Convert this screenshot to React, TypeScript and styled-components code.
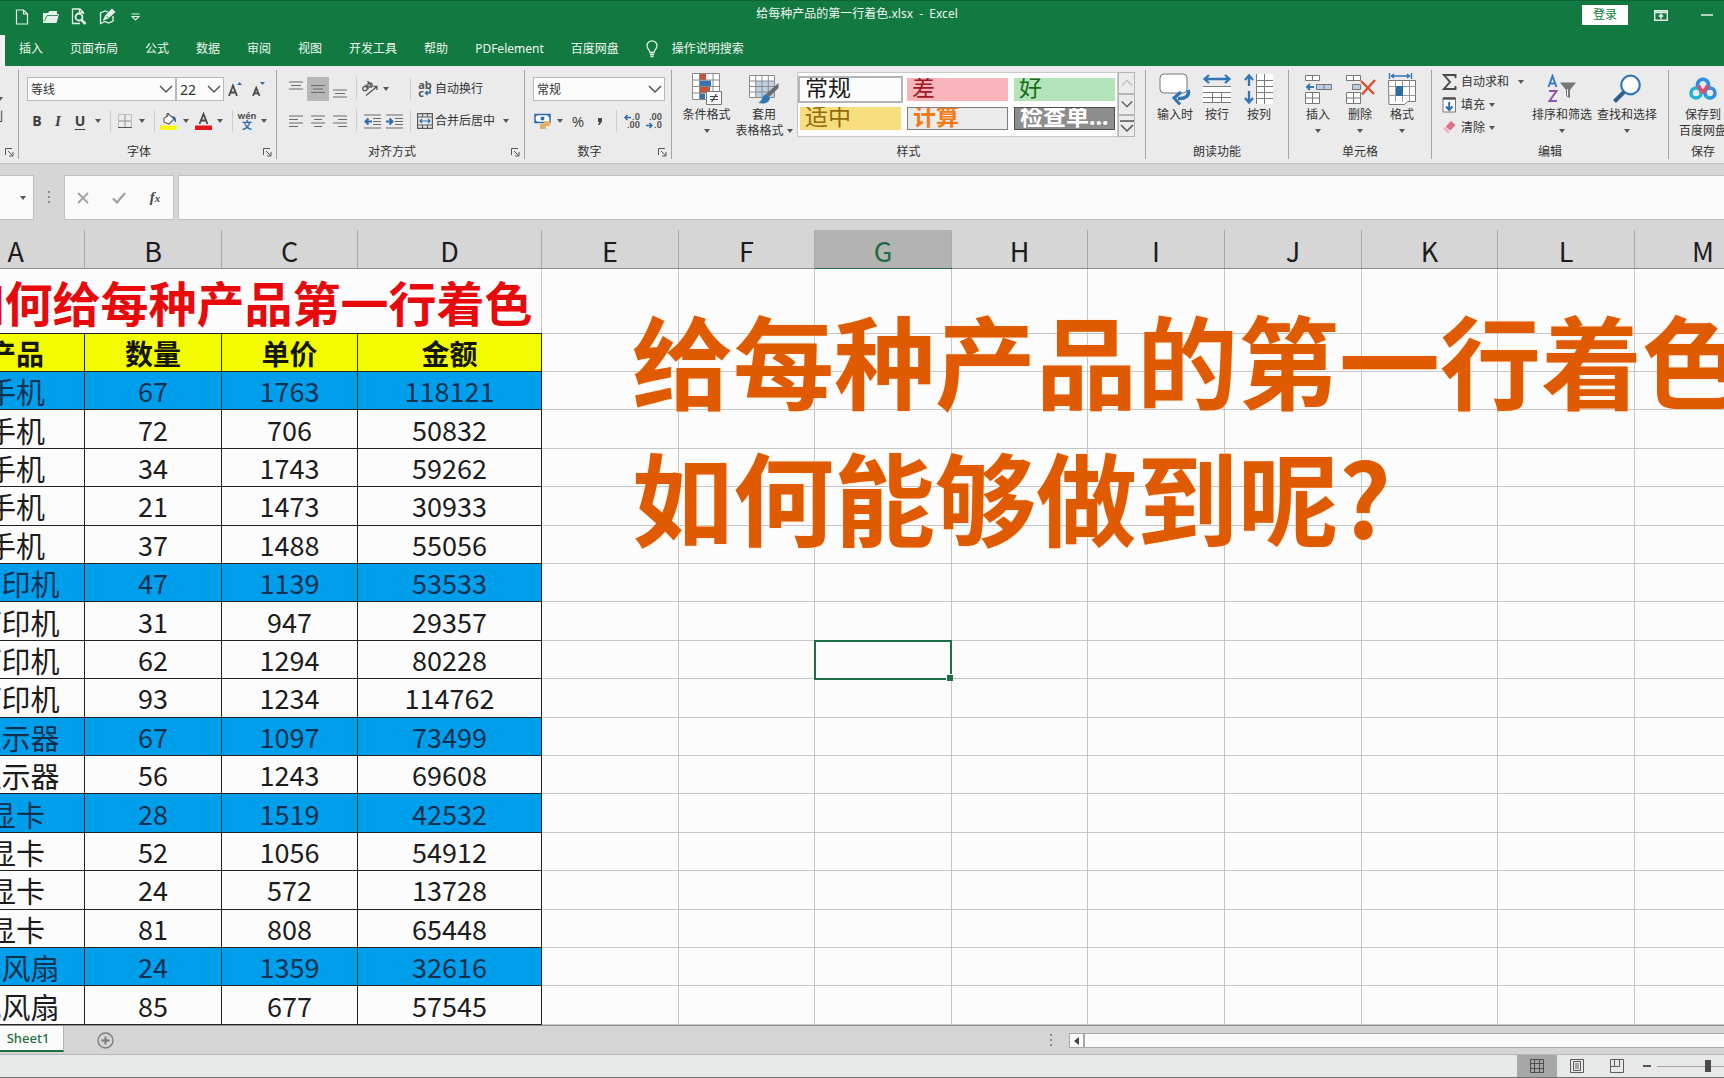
import React from "react";
import styled, { createGlobalStyle, css } from "styled-components";

const GlobalStyle = createGlobalStyle`
  * { box-sizing: border-box; }
  html, body { margin: 0; height: 100%; overflow: hidden; }
  body, button, input, select { font-family: "Noto Sans", "Noto Sans CJK SC", sans-serif; font-size: 12px; color: #333; }
  button { background: none; border: 0; padding: 0; margin: 0; line-height: 16px; white-space: nowrap; }
  svg { display: block; flex: none; }
`;

const Window = styled.div`
  height: 100vh;
  display: flex;
  flex-direction: column;
  overflow: hidden;
  background: #fcfcfc;
`;

/* ---------- title bar and tabs ---------- */

const Head = styled.header`
  flex: none;
  background: #127a40;
  border-top: 1px solid #0b6534;
  color: #eef7f1;
`;
const TitleBar = styled.div`
  display: flex;
  height: 31px;
`;
const QuickBar = styled.div`
  display: flex;
  align-items: center;
  width: 150px;
  padding-left: 8px;
`;
const QuickBtn = styled.button`
  width: 29px;
  height: 24px;
  display: grid;
  place-items: center;
`;
const DocTitle = styled.div`
  flex: 1;
  text-align: center;
  line-height: 16px;
  padding-top: 5px;
  white-space: pre;
`;
const WindowBar = styled.div`
  display: flex;
  align-items: flex-start;
  width: 160px;
  padding: 4px 0 0 18px;
`;
const SignIn = styled.button`
  flex: none;
  width: 46px;
  height: 20px;
  margin-right: 10px;
  background: #fff;
  color: #127a40;
`;
const WinBtn = styled.button`
  flex: none;
  width: 46px;
  height: 20px;
  display: grid;
  place-items: center;
`;
const Tabs = styled.nav`
  display: flex;
  align-items: center;
  height: 34px;
  gap: 27px;
`;
const ActiveTab = styled.button`
  align-self: flex-end;
  width: 5px;
  height: 31px;
  background: #f2f2f2;
  margin-right: -13px;
`;
const Tab = styled.button`
  display: flex;
  align-items: center;
  gap: 14px;
  color: #eef7f1;
`;

/* ---------- ribbon ---------- */

const Ribbon = styled.section`
  flex: none;
  display: flex;
  height: 98px;
  padding: 4px 0;
  background: #ebebeb;
  border-bottom: 1px solid #c2c2c2;
  overflow: hidden;
`;
const GroupBox = styled.div<{ $w: number }>`
  flex: none;
  width: ${(p) => p.$w}px;
  display: flex;
  flex-direction: column;
  border-right: 1px solid #a3a3a3;
`;
const GroupBody = styled.div<{ $pad?: number; $dir?: string; $top?: number }>`
  flex: 1;
  min-height: 0;
  display: flex;
  flex-direction: ${(p) => p.$dir || "column"};
  gap: ${(p) => (p.$dir ? 0 : 8)}px;
  padding: ${(p) => p.$top ?? 7}px 0 0 ${(p) => p.$pad ?? 8}px;
`;
const GroupFoot = styled.div`
  display: flex;
  align-items: center;
  height: 14px;
  line-height: 14px;
`;
const FootText = styled.span`
  flex: 1;
  text-align: center;
`;
const Launcher = styled.button`
  width: 17px;
  height: 14px;
  display: grid;
  place-items: center;
`;
const Row = styled.div`
  display: flex;
  align-items: center;
  height: 24px;
`;
const Cluster = styled.div<{ $w: number }>`
  display: flex;
  width: ${(p) => p.$w}px;
`;
const Slot = styled.button<{ $w?: number; $on?: boolean }>`
  width: ${(p) => p.$w || 22}px;
  height: 24px;
  display: flex;
  align-items: center;
  justify-content: center;
  background: ${(p) => (p.$on ? "#b7b7b7" : "none")};
`;
const Glyph = styled.span<{ $k: string }>`
  font: 700 14px/18px "Open Sans", sans-serif;
  color: #3d3d3d;
  ${(p) => p.$k === "I" && css`font: italic 700 15px/18px "Liberation Serif", serif;`}
  ${(p) => p.$k === "U" && css`text-decoration: underline; text-underline-offset: 3px;`}
  ${(p) => p.$k === "%" && css`font-weight: 400; font-size: 15px;`}
`;
const Sep = styled.span<{ $w?: number }>`
  width: ${(p) => p.$w || 10}px;
  height: 22px;
  display: grid;
  place-items: center;
  &::before { content: ""; width: 1px; height: 22px; background: #cbcbcb; }
`;
const TextBtn = styled.button`
  display: flex;
  align-items: center;
  height: 24px;
`;
const IconCell = styled.span<{ $w?: number }>`
  width: ${(p) => p.$w || 23}px;
  display: grid;
  place-items: center;
`;
const Field = styled.label<{ $w: number; $size?: number }>`
  position: relative;
  width: ${(p) => p.$w}px;
  height: 24px;
  select {
    appearance: none;
    width: 100%;
    height: 24px;
    padding: 0 0 0 3px;
    border: 1px solid #b9b9b9;
    border-radius: 0;
    background: #fcfcfc;
    outline: 0;
    font-size: ${(p) => p.$size || 12}px;
  }
  svg { position: absolute; right: 3px; top: 8px; pointer-events: none; }
`;
const BigBtn = styled.button<{ $w: number }>`
  flex: none;
  width: ${(p) => p.$w}px;
  display: flex;
  flex-direction: column;
  align-items: center;
`;
const BigIcon = styled.span`
  height: 37px;
  padding-top: 1px;
  display: grid;
  place-items: center;
`;
const BigLine = styled.span`
  display: flex;
  align-items: center;
  justify-content: center;
  gap: 3px;
  height: 16px;
  line-height: 16px;
`;
const Gallery = styled.div`
  display: grid;
  grid-template-columns: repeat(3, 101px);
  grid-template-rows: 23px 23px;
  gap: 6px;
  width: 321px;
  height: 65px;
  margin: 2px 0 0 4px;
  padding: 5px 2px;
  background: #fcfcfc;
  border: 1px solid #c8c8c8;
`;
const StyleCell = styled.button<{ $bg: string; $fg: string; $line?: string; $bold?: boolean; $sel?: boolean }>`
  height: 23px;
  overflow: hidden;
  background: ${(p) => p.$bg};
  color: ${(p) => p.$fg};
  font-size: 23px;
  line-height: 16px;
  font-weight: ${(p) => (p.$bold ? 700 : 400)};
  text-align: left;
  padding: 0 0 6px 5px;
  border: ${(p) => (p.$line ? `1px solid ${p.$line}` : "0")};
  box-shadow: ${(p) => (p.$sel ? "0 0 0 2px #b2b4b5" : "none")};
`;
const GalleryNav = styled.div`
  display: grid;
  grid-template-rows: repeat(3, 1fr);
  width: 17px;
  height: 65px;
  margin-top: 2px;
`;
const NavBtn = styled.button`
  display: grid;
  place-items: center;
  border: 1px solid #b5b5b5;
`;
const SmallList = styled.div`
  display: flex;
  flex-direction: column;
  width: 87px;
`;
const SmallBtn = styled.button`
  display: flex;
  align-items: center;
  height: 23px;
  gap: 4px;
`;
const ClipTail = styled.div`
  flex: 1;
  display: flex;
  flex-direction: column;
  gap: 8px;
  width: 6px;
  align-items: flex-end;
  padding-top: 27px;
`;
const ClipText = styled.span`
  line-height: 16px;
  padding-right: 3px;
`;

/* ---------- formula bar ---------- */

const FormulaRow = styled.section`
  flex: none;
  display: flex;
  height: 66px;
  padding: 11px 0 10px;
  background: #d6d6d6;
`;
const NameBox = styled.button`
  width: 34px;
  background: #fafafa;
  border: 1px solid #c0c0c0;
  border-left: 0;
  padding-right: 7px;
  display: flex;
  align-items: center;
  justify-content: flex-end;
`;
const Grip = styled.span<{ $w: number }>`
  width: ${(p) => p.$w}px;
  display: grid;
  place-items: center;
`;
const FxBox = styled.div`
  width: 110px;
  display: grid;
  grid-template-columns: repeat(3, 36px);
  background: #fafafa;
  border: 1px solid #c0c0c0;
  margin-right: 4px;
  button { display: grid; place-items: center; }
`;
const FxMark = styled.span`
  font: italic 700 15px/20px "Liberation Serif", serif;
  color: #4a4a4a;
  small { font-size: 11px; }
`;
const FormulaInput = styled.input`
  flex: 1;
  min-width: 0;
  border: 1px solid #c0c0c0;
  border-right: 0;
  background: #fafafa;
  padding: 0 8px;
  outline: 0;
`;

/* ---------- sheet ---------- */

const SheetArea = styled.main`
  position: relative;
  flex: 1;
  min-height: 0;
  overflow: hidden;
`;
const Grid = styled.table`
  table-layout: fixed;
  border-collapse: collapse;
  width: 1824px;
  height: 100%;
  margin-left: -53px;
  font-family: "Noto Sans CJK SC", sans-serif;
  font-size: 27px;
  line-height: 32px;
  color: #1c1c1c;
`;
const ColHead = styled.th<{ $on?: boolean }>`
  height: 38px;
  padding: 4px 0 0;
  font-weight: 400;
  background: ${(p) => (p.$on ? "#b3b3b3" : "#d6d6d6")};
  color: ${(p) => (p.$on ? "#1c6b43" : "#1c1c1c")};
  border-right: 1px solid #a9a9a9;
  border-bottom: 1px solid ${(p) => (p.$on ? "#1c6b43" : "#8c8c8c")};
`;
const Cell = styled.td`
  position: relative;
  padding: 1px 0 0;
  border: 1px solid #c4c6c8;
`;
const TitleCell = styled(Cell)`
  height: 65px;
  color: #e8090d;
  font-size: 48px;
  line-height: 60px;
  font-weight: 700;
  text-align: center;
  white-space: nowrap;
  border-bottom-color: #222;
`;
const DataCell = styled(Cell)<{ $tone?: "head" | "mark"; $name?: boolean }>`
  text-align: center;
  white-space: nowrap;
  border-color: #222;
  font-size: ${(p) => (p.$name ? 29 : 27)}px;
  ${(p) => p.$tone === "head" && css`background: #f3fb00; font-weight: 700; font-size: 28px; color: #14160a;`}
  ${(p) => p.$tone === "mark" && css`background: #009feb; color: #10304f;`}
`;
const Selection = styled.span`
  position: absolute;
  inset: -1px -1px -2px;
  border: 2px solid #1f6f45;
  &::after {
    content: "";
    position: absolute;
    right: -3px;
    bottom: -3px;
    width: 6px;
    height: 6px;
    background: #1f6f45;
    box-shadow: -1px -1px 0 #fcfcfc;
  }
`;
const Caption = styled.div`
  position: absolute;
  left: 632px;
  top: 60px;
  color: #df5a00;
  font-family: "Noto Sans CJK SC", sans-serif;
  font-size: 101px;
  line-height: 137px;
  font-weight: 700;
  white-space: nowrap;
  text-shadow: 0 0 2px #ffdfc0;
`;

/* ---------- sheet tabs and status ---------- */

const SheetBar = styled.section`
  flex: none;
  display: flex;
  height: 30px;
  background: #d5d5d5;
  border-top: 1px solid #8e8e8e;
  border-bottom: 1px solid #b8b8b8;
`;
const SheetTab = styled.button`
  width: 64px;
  height: 26px;
  background: #fafafa;
  border-bottom: 2px solid #1f6f45;
  border-right: 1px solid #b5b5b5;
  color: #1f6f45;
  font-size: 13px;
  font-weight: 500;
  padding-right: 7px;
`;
const AddSheet = styled.button`
  margin-left: 31px;
  width: 20px;
  display: grid;
  place-items: center;
`;
const Scroller = styled.div`
  width: 40%;
  margin-left: auto;
  display: flex;
  padding: 7px 0 6px;
`;
const ScrollArrow = styled.button`
  width: 15px;
  background: #fafafa;
  border: 1px solid #a8a8a8;
  display: grid;
  place-items: center;
`;
const ScrollTrack = styled.div`
  flex: 1;
  background: #fafafa;
  border: 1px solid #a8a8a8;
  border-width: 1px 0 1px 1px;
`;
const StatusBar = styled.footer`
  flex: none;
  display: flex;
  justify-content: flex-end;
  height: 23px;
  background: #e7e8e8;
  border-bottom: 1px solid #6c7272;
  overflow: hidden;
`;
const ViewBtn = styled.button<{ $on?: boolean }>`
  width: 40px;
  display: grid;
  place-items: center;
  background: ${(p) => (p.$on ? "#a6a7a7" : "none")};
`;
const ZoomOut = styled.button`
  width: 20px;
  display: grid;
  place-items: center;
`;
const ZoomSlot = styled.label`
  width: 67px;
  display: flex;
  align-items: center;
`;
const ZoomRange = styled.input`
  flex: none;
  appearance: none;
  width: 102px;
  height: 14px;
  margin: 0;
  background: linear-gradient(#a2a2a2, #a2a2a2) center / 100% 1px no-repeat;
  &::-webkit-slider-thumb {
    appearance: none;
    width: 6px;
    height: 12px;
    background: #4c4c4c;
  }
`;

/* ---------- icons ---------- */

const Caret = ({ c = "#555" }: { c?: string }) => (
  <svg width="6" height="4" viewBox="0 0 6 4"><path d="M0 0h6L3 4z" fill={c} /></svg>
);
const Chevron = ({ c = "#555", w = 14, up = false }: { c?: string; w?: number; up?: boolean }) => (
  <svg width={w} height="9" viewBox="0 0 14 9"><path d={up ? "M1 8l6-6 6 6" : "M1 1l6 6 6-6"} fill="none" stroke={c} strokeWidth="1.5" /></svg>
);
const Dots = () => (
  <svg width="3" height="13" viewBox="0 0 3 13" fill="#8a8a8a"><path d="M0 0h2v2H0zM0 5h2v2H0zM0 10h2v2H0z" /></svg>
);
const LaunchIcon = () => (
  <svg width="9" height="9" viewBox="0 0 9 9" fill="none" stroke="#555"><path d="M.5 7V.5H7M3 3l4.500 4.500M8 4v4H4" /></svg>
);
const NewFile = () => (
  <svg width="14" height="16" viewBox="0 0 14 16" fill="none" stroke="#e4f2ea" strokeWidth="1.200"><path d="M1.500 1h7l4 4v10h-11zM8.500 1v4h4" /></svg>
);
const OpenFolder = () => (
  <svg width="18" height="16" viewBox="0 0 18 16"><path d="M1 14V4h5l1.500-2H15v3h2l-2.500 9z" fill="#e4f2ea" /><path d="M2.500 12L5 6.500h11" fill="none" stroke="#127a40" strokeWidth=".8" /></svg>
);
const Preview = () => (
  <svg width="16" height="17" viewBox="0 0 16 17" fill="none" stroke="#e4f2ea" strokeWidth="1.300"><path d="M12.500 6V4.500L9 1H1.500v14.500H9M8.500 1v3.500h4" /><circle cx="8" cy="9" r="3.500" strokeWidth="1.800" /><path d="M10.500 12l4 4" strokeWidth="2.500" /></svg>
);
const Draw = () => (
  <svg width="17" height="17" viewBox="0 0 17 17" fill="none" stroke="#e4f2ea" strokeWidth="1.300"><path d="M9 4L6 3 1.500 5v10.500l4.500-2 3.500 1.500L14 13V8" /><path d="M5 11.500l1.500-3.500L13 1.500l2.500 2.500L9 10z" fill="#e4f2ea" /><path d="M7.500 8l2 2" stroke="#127a40" strokeWidth=".8" /></svg>
);
const QuickMore = () => (
  <svg width="9" height="8" viewBox="0 0 9 8" fill="none" stroke="#e4f2ea" strokeWidth="1.200"><path d="M.5 1h8M1 3.500h7L4.500 7z" /></svg>
);
const Display = () => (
  <svg width="14" height="11" viewBox="0 0 14 11" fill="none" stroke="#e4f2ea" strokeWidth="1.400"><path d="M.7.7h12.600v9.600H.7zM.7 2.500h12.600M7 9V4.500M4.800 6.500L7 4.500l2.200 2" /></svg>
);
const Bulb = () => (
  <svg width="12" height="18" viewBox="0 0 12 18" fill="none" stroke="#e4f2ea" strokeWidth="1.300"><path d="M4 12.500C4 10 1 9 1 5.800a5 5 0 0110 0C11 9 8 10 8 12.500zM4 14.500h4M4.500 16.500h3" /></svg>
);
const FontSize = ({ up }: { up?: boolean }) => (
  <svg width="16" height="18" viewBox="0 0 16 18"><path d={up ? "M1 16L5 5.500 9 16M2.500 12.500h5" : "M2 16l3.200-8L8.500 16M3.200 13.300h4"} fill="none" stroke="#4a4a4a" strokeWidth="1.800" /><path d={up ? "M9 5l2.500-3L14 5z" : "M9 2h5l-2.500 3z"} fill="#2f6da8" /></svg>
);
const Borders = () => (
  <svg width="14" height="14" viewBox="0 0 14 14" fill="none" stroke="#8f8f8f"><path d="M.5.5h13v13H.5z" strokeDasharray="1 1" /><path d="M7 1v12M1 7h12" /><path d="M0 13.500h14" stroke="#555" /></svg>
);
const Fill = () => (
  <svg width="18" height="18" viewBox="0 0 18 18"><path d="M0 13.500h17V18H0z" fill="#f7f714" /><path d="M4 6.500l5-4 5 4.500-5 5-5-2z" fill="#fff" stroke="#666" strokeWidth="1.200" /><path d="M7 5V1.500h2" fill="none" stroke="#555" /><path d="M12 4c3 0 4.500 2 4 6-1.500 0-2-1-2-3z" fill="#2f6da8" /></svg>
);
const FontColor = () => (
  <svg width="17" height="18" viewBox="0 0 17 18"><path d="M0 13.500h17V18H0z" fill="#e3171b" /><path d="M4.500 12L8.500 2l4 10M6 8.500h5" fill="none" stroke="#4a4a4a" strokeWidth="1.800" /></svg>
);
const PhoneticBox = styled.span`
  display: flex;
  flex-direction: column;
  align-items: center;
  font: 700 9px/8px "Noto Sans", sans-serif;
  color: #555;
  b { font: 700 10px/10px "Noto Sans CJK SC", sans-serif; color: #2f6da8; }
`;
const Lines = ({ d }: { d: string }) => (
  <svg width="16" height="18" viewBox="0 0 16 18" fill="none" stroke="#6a6a6a" strokeWidth="1.200"><path d={d} /></svg>
);
const Orient = () => (
  <svg width="18" height="16" viewBox="0 0 18 16" fill="none" stroke="#555" strokeWidth="1.300"><circle cx="4" cy="7.500" r="2.200" /><path d="M4.500 3.500l3 4.500" /><circle cx="9" cy="4" r="2.200" /><path d="M6.500 0l4.500 6M5 14.500L15.500 6M12.500 5.500h3.500V9" /></svg>
);
const Indent = ({ out }: { out?: boolean }) => (
  <svg width="17" height="15" viewBox="0 0 17 15" fill="none" stroke="#6a6a6a" strokeWidth="1.200"><path d="M0 1h17M9 4.500h8M9 7.500h8M9 10.500h8M0 14h17" /><path d={out ? "M8 7.500H1.500M4.500 4.500l-3 3 3 3" : "M0 7.500h6.500M3.500 4.500l3 3-3 3"} stroke="#2f6da8" strokeWidth="2" /></svg>
);
const WrapBox = styled.span`
  display: flex;
  align-items: flex-start;
  flex-direction: column;
  font: 700 11px/8px "Noto Sans", sans-serif;
  color: #555;
  i { font-style: normal; display: flex; }
`;
const Merge = () => (
  <svg width="16" height="16" viewBox="0 0 16 16" fill="none" stroke="#5a5a5a" strokeWidth="1.200"><path d="M.6.6h14.800v14.800H.6zM.6 4h14.800M.6 12h14.800M5.500.6V4M10.500.6V4M5.500 12v3.400M10.500 12v3.400" /><path d="M3 8h10M5 6L3 8l2 2M11 6l2 2-2 2" stroke="#2f6da8" /></svg>
);
const Currency = () => (
  <svg width="18" height="17" viewBox="0 0 18 17"><path d="M1 1.500h15v8H1z" fill="#fff" stroke="#2f6da8" strokeWidth="1.500" /><path d="M1 1h4L1 4zM16 1v4l-4-4zM1 10V7l4 3z" fill="#2f6da8" /><circle cx="8.500" cy="5.500" r="2" fill="#2f6da8" /><path d="M10 8h6v5h-6zM6 11h6v5H6z" fill="#e6b06a" /></svg>
);
const DecimalBox = styled.span`
  display: flex;
  flex-direction: column;
  align-items: flex-end;
  font: 700 9px/8px "Roboto", sans-serif;
  color: #555;
  i { font-style: normal; display: flex; align-items: center; gap: 1px; }
`;
const MiniArrow = ({ r }: { r?: boolean }) => (
  <svg width="7" height="7" viewBox="0 0 7 7" fill="none" stroke="#2f6da8" strokeWidth="1.500"><path d={r ? "M0 3.500h6M3.500 1L6 3.500 3.500 6" : "M7 3.500H1M3.500 1L1 3.500 3.500 6"} /></svg>
);
const WrapArrow = () => (
  <svg width="7" height="7" viewBox="0 0 7 7" fill="none" stroke="#2f6da8" strokeWidth="1.500"><path d="M6 0v4H1.500M3.500 2l-2 2 2 2" /></svg>
);
const CondFormat = () => (
  <svg width="32" height="32" viewBox="0 0 32 32"><path d="M1.500.5h27v26h-27z" fill="#fff" /><path d="M9 1h6v6H9zM9 14h10v6H9z" fill="#c8513a" /><path d="M9 7.500h11v6H9zM9 20.500h5v6H9z" fill="#3574ae" /><path d="M1.500.5h27v26h-27zM1.500 7h27M1.500 13.500h27M1.500 20h27M8.500.5v26M22 .5v26" fill="none" stroke="#8a8a8a" /><path d="M15.500 18.500h15v13h-15z" fill="#fafafa" stroke="#777" /><path d="M19 23.500h8M19 26.500h8M25.500 21l-5 8" stroke="#444" strokeWidth="1.200" /></svg>
);
const TableFormat = () => (
  <svg width="32" height="31" viewBox="0 0 32 31"><path d="M1.500 1.500h25v22h-25z" fill="#fff" /><path d="M8 7h18v16H8z" fill="#bcd0e6" /><path d="M1.500 1.500h25v22h-25zM1.500 7h25M1.500 12.500h25M1.500 18h25M7.700 1.500v22M14 1.500v22M20.300 1.500v22" fill="none" stroke="#8a8a8a" /><path d="M30.500 9v5L21 23l-3-3z" fill="#6b6b6b" /><path d="M18 20l4 4c-1 6-7 6-12 5 4-1 4-8 8-9z" fill="#2f76b5" /></svg>
);
const SpeakEnter = () => (
  <svg width="32" height="32" viewBox="0 0 32 32" fill="none"><rect x="1" y="1" width="27" height="19" rx="4" fill="#fff" stroke="#777" /><path d="M29 17c2 6-3 9-10 8.500" stroke="#2f76b5" strokeWidth="3.500" /><path d="M22 19l-7 6 6 6.500" stroke="#2f76b5" strokeWidth="3" /></svg>
);
const ByRow = () => (
  <svg width="30" height="32" viewBox="0 0 30 32" fill="none"><path d="M2 6h26M7 2L2.500 6 7 10M23 2l4.500 4-4.500 4" stroke="#2f76b5" strokeWidth="2.300" /><path d="M1 13h28v17H1z" fill="#fff" /><path d="M1 13.500h28M1 19.500h28M1 29.500h28M10.500 19.500v10M19.500 19.500v10M1 24.500h28" stroke="#7a7a7a" /></svg>
);
const ByCol = () => (
  <svg width="30" height="32" viewBox="0 0 30 32" fill="none"><path d="M5 3v10M1 7l4-4.500L9 7M5 18v11M1 25l4 4.500L9 25" stroke="#2f76b5" strokeWidth="2.300" /><path d="M12 1h17v30H12z" fill="#fff" /><path d="M12.500 1v30M20.500 1v30M12.500 7.500H29M12.500 13.500H29M12.500 19.500H29M12.500 25.500H29" stroke="#7a7a7a" /></svg>
);
const InsertCells = () => (
  <svg width="28" height="31" viewBox="0 0 28 31" fill="#fff" stroke="#777"><path d="M1.500 1.500h14v5h-14zM8.500 1.500v5M1.500 18.500h14v11h-14zM8.500 18.500v11M1.500 24h14" /><path d="M12.500 10.500h15v5h-15zM20 10.500v5" fill="#b9cde4" /><path d="M10 13H3M6 10l-3 3 3 3" fill="none" stroke="#2f76b5" strokeWidth="2" /></svg>
);
const DeleteCells = () => (
  <svg width="31" height="31" viewBox="0 0 31 31" fill="#fff" stroke="#777"><path d="M1.500 1.500h14v5h-14zM8.500 1.500v5M1.500 18.500h14v11h-14zM8.500 18.500v11M1.500 24h14" /><path d="M7.500 10.500h8v5h-8z" fill="#b9cde4" /><path d="M16 7l13 13M30 6L17 20.500" fill="none" stroke="#d9502e" strokeWidth="2.400" /></svg>
);
const FormatCells = () => (
  <svg width="30" height="32" viewBox="0 0 30 32" fill="none"><path d="M2.500 0v6M24.500 0v6M4 3h19M7 1L4.500 3 7 5M20 1l2.500 2L20 5" stroke="#2f76b5" strokeWidth="1.400" /><path d="M1.500 7.500h27v21h-8l-3 3H2z" fill="#fff" stroke="#777" /><path d="M8.500 7.500v21M15.500 7.500v21M22.500 7.500v21M1.500 13.500h27M1.500 22.500h27" stroke="#999" /><path d="M9 13h7v10H9z" fill="#2f6da8" /></svg>
);
const Sum = () => (
  <svg width="15" height="16" viewBox="0 0 15 16" fill="none" stroke="#4a4a4a" strokeWidth="1.900"><path d="M13.500 4V1H2l6 7-6 7h11.500v-3" /></svg>
);
const FillDown = () => (
  <svg width="15" height="16" viewBox="0 0 15 16" fill="none"><path d="M1 1h12.500v14H1z" fill="#fff" stroke="#777" /><path d="M1 1.500h12.500" stroke="#555" strokeWidth="2.500" /><path d="M7.200 5v8M4 9.500l3.200 3.500 3.300-3.500" stroke="#2f6da8" strokeWidth="2" /></svg>
);
const Eraser = () => (
  <svg width="15" height="15" viewBox="0 0 15 15"><path d="M9 1l4.500 4-7.500 8-4.500-4z" fill="#e0708a" /><path d="M1.500 9L3.500 7 8 11l-2 2.500z" fill="#f2b3c1" /><path d="M3.500 7L8 11" stroke="#fff" /></svg>
);
const SortFilter = () => (
  <svg width="30" height="30" viewBox="0 0 30 30" fill="none"><path d="M1.500 13L5.500 2l4 11M3 9.500h5.500" stroke="#3b7cc0" strokeWidth="2" /><path d="M2 17h7.500l-7 10H10" stroke="#8b57ad" strokeWidth="2" /><path d="M13 8.500h16L23 16v8l-4-2v-6z" fill="#777" /><path d="M20.500 15v7" stroke="#eee" /></svg>
);
const Find = () => (
  <svg width="30" height="30" viewBox="0 0 30 30" fill="none"><circle cx="18.500" cy="11" r="9.300" fill="#fcfcfc" stroke="#3577b3" strokeWidth="2.200" /><path d="M12 18L2.500 27.500" stroke="#345f8c" strokeWidth="4" /></svg>
);
const Cloud = () => (
  <svg width="28" height="26" viewBox="0 0 28 26" fill="none" strokeWidth="3.600"><circle cx="7" cy="17" r="5" stroke="#22b3cf" /><circle cx="21" cy="17" r="5" stroke="#2f8ee0" /><path d="M9 11a5.500 5.500 0 1110 0" stroke="#2f8ee0" /><path d="M9.500 9.500c1 3 3 5 4.500 6.500 1.500-1.500 3.500-3.500 4.500-6.500" stroke="#e34a6c" /><path d="M17 20a5 5 0 004 2" stroke="#22b3cf" /></svg>
);
const NormalView = () => (
  <svg width="14" height="14" viewBox="0 0 14 14" fill="none" stroke="#4e4e4e"><path d="M.5.5h13v13H.5zM4.500.5v13M9.500.5v13M.5 4.500h13M.5 9.500h13" /></svg>
);
const PageView = () => (
  <svg width="14" height="14" viewBox="0 0 14 14" fill="none" stroke="#5c5c5c"><path d="M.5.5h13v13H.5zM3.500 2.500h7v9h-7zM5 5h4M5 7h4M5 9h4" /></svg>
);
const BreakView = () => (
  <svg width="14" height="14" viewBox="0 0 14 14" fill="none" stroke="#5c5c5c"><path d="M.5.5h13v13H.5zM4.500.5v7M.5 7.500h9V.5" /></svg>
);

/* ---------- data ---------- */

const TABS = ["插入", "页面布局", "公式", "数据", "审阅", "视图", "开发工具", "帮助", "PDFelement", "百度网盘"];

const COLUMNS: [string, number][] = [
  ["A", 137], ["B", 137], ["C", 136], ["D", 184], ["E", 137], ["F", 136], ["G", 137],
  ["H", 136], ["I", 137], ["J", 137], ["K", 136], ["L", 137], ["M", 137],
];
const EMPTY = COLUMNS.slice(4).map(([name]) => name);

const ROWS: [string, number, number, number][] = [
  ["手机", 67, 1763, 118121],
  ["手机", 72, 706, 50832],
  ["手机", 34, 1743, 59262],
  ["手机", 21, 1473, 30933],
  ["手机", 37, 1488, 55056],
  ["打印机", 47, 1139, 53533],
  ["打印机", 31, 947, 29357],
  ["打印机", 62, 1294, 80228],
  ["打印机", 93, 1234, 114762],
  ["显示器", 67, 1097, 73499],
  ["显示器", 56, 1243, 69608],
  ["显卡", 28, 1519, 42532],
  ["显卡", 52, 1056, 54912],
  ["显卡", 24, 572, 13728],
  ["显卡", 81, 808, 65448],
  ["电风扇", 24, 1359, 32616],
  ["电风扇", 85, 677, 57545],
];
const SELECTED = { row: 7, col: "G" };

const Group = ({ w, name, launch, children }: { w: number; name: string; launch?: boolean; children: React.ReactNode }) => (
  <GroupBox $w={w}>
    {children}
    <GroupFoot>
      <FootText>{name}</FootText>
      {launch && <Launcher aria-label={`${name}设置`}><LaunchIcon /></Launcher>}
    </GroupFoot>
  </GroupBox>
);

const Big = ({ w, icon, lines, caret }: { w: number; icon: React.ReactNode; lines: string[]; caret?: "below" | "inline" }) => (
  <BigBtn $w={w}>
    <BigIcon>{icon}</BigIcon>
    {lines.map((l, i) => (
      <BigLine key={l}>{l}{caret === "inline" && i === lines.length - 1 && <Caret />}</BigLine>
    ))}
    {caret === "below" && <BigLine><Caret /></BigLine>}
  </BigBtn>
);

export default function App() {
  return (
    <Window>
      <GlobalStyle />
      <Head>
        <TitleBar>
          <QuickBar>
            <QuickBtn aria-label="新建"><NewFile /></QuickBtn>
            <QuickBtn aria-label="打开"><OpenFolder /></QuickBtn>
            <QuickBtn aria-label="打印预览"><Preview /></QuickBtn>
            <QuickBtn aria-label="绘图"><Draw /></QuickBtn>
            <QuickBtn aria-label="更多"><QuickMore /></QuickBtn>
          </QuickBar>
          <DocTitle>{"给每种产品的第一行着色.xlsx  -  Excel"}</DocTitle>
          <WindowBar>
            <SignIn>登录</SignIn>
            <WinBtn aria-label="功能区显示选项"><Display /></WinBtn>
            <WinBtn aria-label="最小化"><svg width="12" height="2"><path d="M0 1h12" stroke="#e4f2ea" strokeWidth="1.500" /></svg></WinBtn>
          </WindowBar>
        </TitleBar>
        <Tabs>
          <ActiveTab aria-label="开始" />
          {TABS.map((t) => <Tab key={t}>{t}</Tab>)}
          <Tab><Bulb />操作说明搜索</Tab>
        </Tabs>
      </Head>

      <Ribbon>
        <Group w={19} name="" launch>
          <ClipTail><ClipText><Caret /></ClipText><ClipText>刷</ClipText></ClipTail>
        </Group>

        <Group w={258} name="字体" launch>
          <GroupBody>
            <Row>
              <Field $w={149}><select aria-label="字体"><option>等线</option></select><Chevron /></Field>
              <Field $w={48} $size={14}><select aria-label="字号"><option>22</option></select><Chevron /></Field>
              <Slot $w={24} aria-label="增大字号"><FontSize up /></Slot>
              <Slot aria-label="减小字号"><FontSize /></Slot>
            </Row>
            <Row>
              <Slot $w={20}><Glyph $k="B">B</Glyph></Slot>
              <Slot><Glyph $k="I">I</Glyph></Slot>
              <Slot><Glyph $k="U">U</Glyph></Slot>
              <Slot $w={14} aria-label="下划线选项"><Caret /></Slot>
              <Sep />
              <Slot $w={20} aria-label="边框"><Borders /></Slot>
              <Slot $w={14} aria-label="边框选项"><Caret /></Slot>
              <Sep />
              <Slot $w={20} aria-label="填充颜色"><Fill /></Slot>
              <Slot $w={14} aria-label="填充颜色选项"><Caret /></Slot>
              <Slot $w={20} aria-label="字体颜色"><FontColor /></Slot>
              <Slot $w={14} aria-label="字体颜色选项"><Caret /></Slot>
              <Sep />
              <Slot $w={20} aria-label="拼音"><PhoneticBox>wén<b>文</b></PhoneticBox></Slot>
              <Slot $w={14} aria-label="拼音选项"><Caret /></Slot>
            </Row>
          </GroupBody>
        </Group>

        <Group w={248} name="对齐方式" launch>
          <GroupBody>
            <Row>
              <Cluster $w={120}>
                <Slot aria-label="顶端对齐"><Lines d="M1 2h14M3 5.500h10M1 9h14" /></Slot>
                <Slot $on aria-label="垂直居中"><Lines d="M1 5.500h14M3 9h10M1 12.500h14" /></Slot>
                <Slot aria-label="底端对齐"><Lines d="M1 10h14M3 13.500h10M1 17h14" /></Slot>
                <Sep />
                <Slot $w={18} aria-label="方向"><Orient /></Slot>
                <Slot $w={14} aria-label="方向选项"><Caret /></Slot>
              </Cluster>
              <Sep />
              <TextBtn><IconCell $w={20}><WrapBox>ab<i>c<WrapArrow /></i></WrapBox></IconCell>自动换行</TextBtn>
            </Row>
            <Row>
              <Cluster $w={120}>
                <Slot aria-label="左对齐"><Lines d="M1 4h14M1 7.500h9M1 11h14M1 14.500h9" /></Slot>
                <Slot aria-label="居中"><Lines d="M1 4h14M4 7.500h8M1 11h14M4 14.500h8" /></Slot>
                <Slot aria-label="右对齐"><Lines d="M1 4h14M6 7.500h9M1 11h14M6 14.500h9" /></Slot>
                <Sep />
                <Slot aria-label="减少缩进"><Indent out /></Slot>
                <Slot aria-label="增加缩进"><Indent /></Slot>
              </Cluster>
              <Sep />
              <TextBtn><IconCell $w={20}><Merge /></IconCell>合并后居中</TextBtn>
              <Slot aria-label="合并选项"><Caret /></Slot>
            </Row>
          </GroupBody>
        </Group>

        <Group w={147} name="数字" launch>
          <GroupBody>
            <Row>
              <Field $w={132}><select aria-label="数字格式"><option>常规</option></select><Chevron /></Field>
            </Row>
            <Row>
              <Slot $w={20} aria-label="会计格式"><Currency /></Slot>
              <Slot $w={14} aria-label="会计格式选项"><Caret /></Slot>
              <Slot><Glyph $k="%">%</Glyph></Slot>
              <Slot aria-label="千位分隔"><svg width="6" height="9" viewBox="0 0 6 9"><path d="M1 1h4v3.500L2.500 8H1l1.200-3H1z" fill="#4a4a4a" /></svg></Slot>
              <Sep />
              <Slot aria-label="增加小数位数"><DecimalBox><i><MiniArrow />.0</i>.00</DecimalBox></Slot>
              <Slot aria-label="减少小数位数"><DecimalBox>.00<i><MiniArrow r />.0</i></DecimalBox></Slot>
            </Row>
          </GroupBody>
        </Group>

        <Group w={474} name="样式">
          <GroupBody $dir="row" $top={0} $pad={6}>
            <Big w={57} icon={<CondFormat />} lines={["条件格式"]} caret="below" />
            <Big w={58} icon={<TableFormat />} lines={["套用", "表格格式"]} caret="inline" />
            <Gallery>
              <StyleCell $bg="#fcfcfc" $fg="#1c1c1c" $sel>常规</StyleCell>
              <StyleCell $bg="#f7b4bb" $fg="#9c1c22">差</StyleCell>
              <StyleCell $bg="#b3e3b8" $fg="#176b1b">好</StyleCell>
              <StyleCell $bg="#f7de7d" $fg="#94690c">适中</StyleCell>
              <StyleCell $bg="#ebebeb" $fg="#f57a14" $line="#7f7f7f" $bold>计算</StyleCell>
              <StyleCell $bg="#8d8d8d" $fg="#fff" $line="#4d4d4d" $bold>检查单...</StyleCell>
            </Gallery>
            <GalleryNav>
              <NavBtn aria-label="上一行"><Chevron up c="#bbb" w={12} /></NavBtn>
              <NavBtn aria-label="下一行"><Chevron w={12} /></NavBtn>
              <NavBtn aria-label="其他"><svg width="14" height="13" viewBox="0 0 14 13" fill="none" stroke="#555" strokeWidth="1.500"><path d="M0 1h14M1 5l6 6 6-6" /></svg></NavBtn>
            </GalleryNav>
          </GroupBody>
        </Group>

        <Group w={143} name="朗读功能">
          <GroupBody $dir="row" $top={0} $pad={8}>
            <Big w={42} icon={<SpeakEnter />} lines={["输入时"]} />
            <Big w={42} icon={<ByRow />} lines={["按行"]} />
            <Big w={42} icon={<ByCol />} lines={["按列"]} />
          </GroupBody>
        </Group>

        <Group w={143} name="单元格">
          <GroupBody $dir="row" $top={0} $pad={8}>
            <Big w={42} icon={<InsertCells />} lines={["插入"]} caret="below" />
            <Big w={42} icon={<DeleteCells />} lines={["删除"]} caret="below" />
            <Big w={42} icon={<FormatCells />} lines={["格式"]} caret="below" />
          </GroupBody>
        </Group>

        <Group w={237} name="编辑">
          <GroupBody $dir="row" $top={0} $pad={10}>
            <SmallList>
              <SmallBtn><Sum />自动求和<IconCell $w={18}><Caret /></IconCell></SmallBtn>
              <SmallBtn><FillDown />填充<Caret /></SmallBtn>
              <SmallBtn><Eraser />清除<Caret /></SmallBtn>
            </SmallList>
            <Big w={66} icon={<SortFilter />} lines={["排序和筛选"]} caret="below" />
            <Big w={64} icon={<Find />} lines={["查找和选择"]} caret="below" />
          </GroupBody>
        </Group>

        <Group w={69} name="保存">
          <GroupBody $dir="row" $top={0} $pad={8}>
            <Big w={52} icon={<Cloud />} lines={["保存到", "百度网盘"]} />
          </GroupBody>
        </Group>
      </Ribbon>

      <FormulaRow>
        <NameBox aria-label="名称框"><Caret /></NameBox>
        <Grip $w={30}><Dots /></Grip>
        <FxBox>
          <button aria-label="取消"><svg width="12" height="12" viewBox="0 0 12 12"><path d="M1 1l10 10M11 1L1 11" stroke="#a2a2a2" strokeWidth="1.800" /></svg></button>
          <button aria-label="输入"><svg width="14" height="12" viewBox="0 0 14 12"><path d="M1 6.500L5 10.500 13 1" fill="none" stroke="#a2a2a2" strokeWidth="2.300" /></svg></button>
          <button><FxMark>f<small>x</small></FxMark></button>
        </FxBox>
        <FormulaInput aria-label="编辑栏" />
      </FormulaRow>

      <SheetArea>
        <Grid>
          <colgroup>{COLUMNS.map(([name, w]) => <col key={name} width={w} />)}</colgroup>
          <thead>
            <tr>{COLUMNS.map(([name]) => <ColHead key={name} scope="col" $on={name === SELECTED.col}>{name}</ColHead>)}</tr>
          </thead>
          <tbody>
            <tr>
              <TitleCell colSpan={4}>如何给每种产品第一行着色</TitleCell>
              {EMPTY.map((c) => <Cell key={c} />)}
            </tr>
            <tr>
              {["产品", "数量", "单价", "金额"].map((h) => <DataCell key={h} $tone="head">{h}</DataCell>)}
              {EMPTY.map((c) => <Cell key={c} />)}
            </tr>
            {ROWS.map((r, i) => {
              const tone = i === 0 || ROWS[i - 1][0] !== r[0] ? "mark" : undefined;
              return (
                <tr key={i}>
                  {r.map((v, j) => <DataCell key={j} $tone={tone} $name={j === 0}>{v}</DataCell>)}
                  {EMPTY.map((c) => (
                    <Cell key={c}>{i === SELECTED.row && c === SELECTED.col && <Selection />}</Cell>
                  ))}
                </tr>
              );
            })}
          </tbody>
        </Grid>
        <Caption>给每种产品的第一行着色<br />如何能够做到呢?</Caption>
      </SheetArea>

      <SheetBar>
        <SheetTab>Sheet1</SheetTab>
        <AddSheet aria-label="新工作表">
          <svg width="17" height="17" viewBox="0 0 17 17" fill="none" stroke="#7b7b7b" strokeWidth="1.300"><circle cx="8.500" cy="8.500" r="7.500" /><path d="M8.500 4.500v8M4.500 8.500h8" strokeWidth="2" /></svg>
        </AddSheet>
        <Scroller>
          <Grip $w={35}><Dots /></Grip>
          <ScrollArrow aria-label="向左滚动"><svg width="5" height="8" viewBox="0 0 5 8"><path d="M5 0v8L0 4z" fill="#444" /></svg></ScrollArrow>
          <ScrollTrack />
        </Scroller>
      </SheetBar>

      <StatusBar>
        <ViewBtn $on aria-label="普通"><NormalView /></ViewBtn>
        <ViewBtn aria-label="页面布局视图"><PageView /></ViewBtn>
        <ViewBtn aria-label="分页预览"><BreakView /></ViewBtn>
        <ZoomOut aria-label="缩小"><svg width="8" height="2"><path d="M0 1h8" stroke="#555" strokeWidth="2" /></svg></ZoomOut>
        <ZoomSlot><ZoomRange type="range" aria-label="缩放" defaultValue={50} /></ZoomSlot>
      </StatusBar>
    </Window>
  );
}
